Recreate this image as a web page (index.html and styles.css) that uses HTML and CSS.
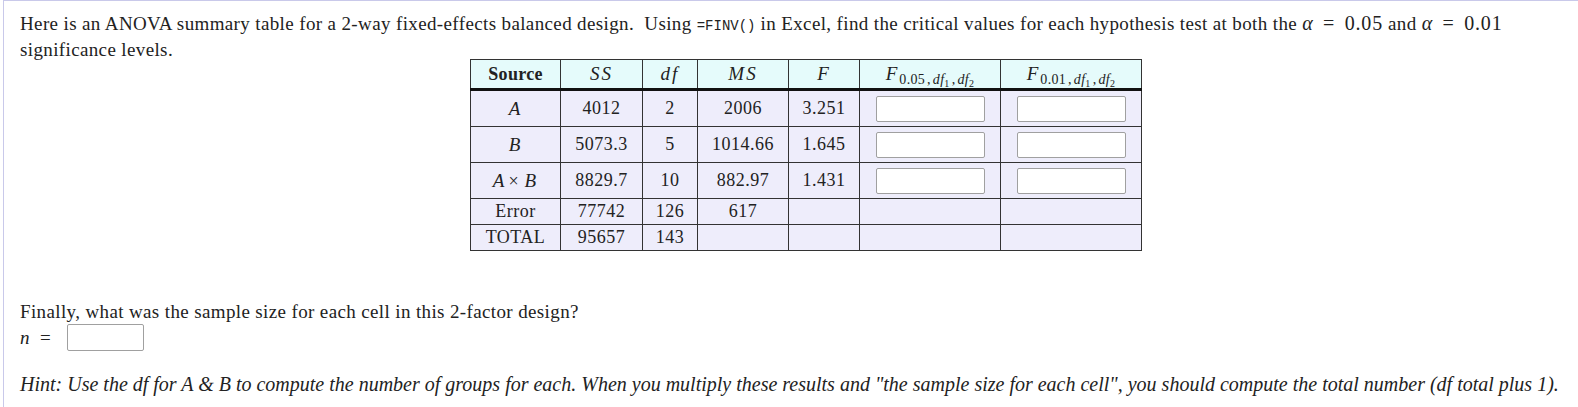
FILE: index.html
```html
<!DOCTYPE html>
<html>
<head>
<meta charset="utf-8">
<link rel="stylesheet" href="styles.css">
</head>
<body>
<div class="frame">
  <p class="intro">Here is an ANOVA summary table for a 2-way fixed-effects balanced design.&nbsp; Using <code>=FINV()</code> in Excel, find the critical values for each hypothesis test at both the <span class="m"><i class="v">α</i><span class="eq">=</span><span class="num">0.05</span></span> and <span class="m"><i class="v">α</i><span class="eq">=</span><span class="num">0.01</span></span> significance levels.</p>
  <table class="anova">
    <thead>
      <tr>
        <th class="c-src"><b>Source</b></th>
        <th class="c-ss"><i class="mv">SS</i></th>
        <th class="c-df"><i class="mv">df</i></th>
        <th class="c-ms"><i class="mv">MS</i></th>
        <th class="c-f"><i class="mv">F</i></th>
        <th class="c-crit"><i class="mv">F</i><span class="sub">0.05<span class="sp">,</span><i>df</i><span class="subsub">1</span><span class="sp">,</span><i>df</i><span class="subsub">2</span></span></th>
        <th class="c-crit"><i class="mv">F</i><span class="sub">0.01<span class="sp">,</span><i>df</i><span class="subsub">1</span><span class="sp">,</span><i>df</i><span class="subsub">2</span></span></th>
      </tr>
    </thead>
    <tbody>
      <tr class="tall">
        <td><i class="mv">A</i></td><td>4012</td><td>2</td><td>2006</td><td>3.251</td>
        <td><input type="text" class="box"></td><td><input type="text" class="box"></td>
      </tr>
      <tr class="tall">
        <td><i class="mv">B</i></td><td>5073.3</td><td>5</td><td>1014.66</td><td>1.645</td>
        <td><input type="text" class="box"></td><td><input type="text" class="box"></td>
      </tr>
      <tr class="tall">
        <td><i class="mv">A</i><span class="times">×</span><i class="mv">B</i></td><td>8829.7</td><td>10</td><td>882.97</td><td>1.431</td>
        <td><input type="text" class="box"></td><td><input type="text" class="box"></td>
      </tr>
      <tr class="short">
        <td>Error</td><td>77742</td><td>126</td><td>617</td><td></td><td></td><td></td>
      </tr>
      <tr class="short">
        <td>TOTAL</td><td>95657</td><td>143</td><td></td><td></td><td></td><td></td>
      </tr>
    </tbody>
  </table>
  <p class="finally">Finally, what was the sample size for each cell in this 2-factor design?</p>
  <div class="nrow"><i class="nv">n</i><span class="neq">=</span><input type="text" class="nbox"></div>
  <p class="hint">Hint: Use the df for A &amp; B to compute the number of groups for each. When you multiply these results and "the sample size for each cell", you should compute the total number (df total plus 1).</p>
</div>
</body>
</html>
```

FILE: styles.css
```css
html, body {
  margin: 0;
  padding: 0;
  background: #ffffff;
}
body {
  font-family: "Liberation Serif", "Times New Roman", serif;
  font-size: 19px;
  letter-spacing: 0.37px;
  color: #222222;
}
.frame {
  margin-left: 3px;
  border-top: 1px solid #c9c9ea;
  border-left: 1px solid #c9c9ea;
  padding: 10px 0 0 16px;
  height: 396px;
}
.intro {
  margin: 0;
  line-height: 24px;
  width: 1520px;
}
code {
  font-family: "Liberation Mono", monospace;
  font-size: 14px;
  letter-spacing: 0;
}
.m {
  white-space: nowrap;
  font-size: 19px;
}
.num {
  font-size: 20px;
  letter-spacing: 0.8px;
}
.v {
  font-style: italic;
  font-size: 20px;
}
.eq {
  margin: 0 10px;
  font-size: 20px;
}
.anova {
  border-collapse: collapse;
  margin: -3px 0 0 450px;
  font-family: "Liberation Serif", "Times New Roman", serif;
  font-size: 18px;
  letter-spacing: 0.5px;
  color: #222222;
}
.anova th, .anova td {
  border: 1px solid #333333;
  text-align: center;
  padding: 0;
  font-weight: normal;
}
.anova thead th {
  background: #e5fbfb;
  height: 28px;
  border-bottom: 3px solid #111111;
}
.anova thead th b {
  font-size: 18px;
  font-weight: bold;
  letter-spacing: 0.3px;
}
.anova tbody td {
  background: #eeedfb;
}
.mv {
  font-style: italic;
  font-size: 19px;
  letter-spacing: 2px;
}
.c-src { width: 89px; }
.c-ss { width: 81px; }
.c-df { width: 54px; }
.c-ms { width: 90px; }
.c-f { width: 70px; }
.c-crit { width: 140px; }
.tall td { height: 35px; }
.short td { height: 25px; }
.sub {
  font-size: 14px;
  letter-spacing: 0.3px;
  position: relative;
  top: 4px;
}
.subsub {
  font-size: 10px;
  position: relative;
  top: 3px;
}
.sp { margin: 0 2px; }
.times { margin: 0 6px 0 2px; letter-spacing: 0; }
.box {
  width: 107px;
  height: 24px;
  border: 1px solid #a0a0a0;
  border-radius: 2px;
  padding: 0;
  display: block;
  margin: 0 auto;
  background: #ffffff;
}
.finally {
  margin: 51px 0 0 0;
  line-height: 20px;
}
.nrow {
  display: flex;
  align-items: center;
  margin-top: 1px;
  height: 29px;
}
.nv {
  font-style: italic;
  font-size: 19px;
}
.neq {
  margin: 0 16px 0 10px;
  font-size: 19px;
}
.nbox {
  width: 75px;
  height: 25px;
  border: 1px solid #a0a0a0;
  border-radius: 2px;
  padding: 0;
  margin: 0;
  background: #ffffff;
}
.hint {
  margin: 21px 0 0 0;
  font-size: 20px;
  font-style: italic;
  letter-spacing: 0;
  line-height: 22px;
}
```
